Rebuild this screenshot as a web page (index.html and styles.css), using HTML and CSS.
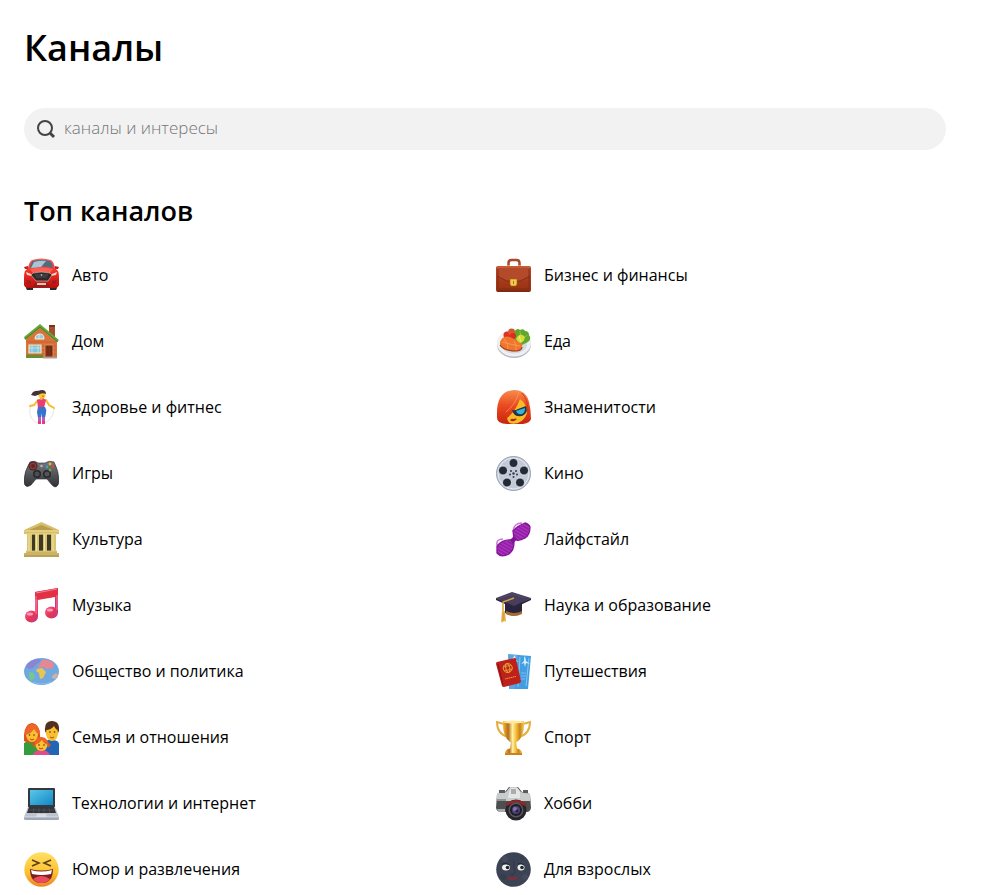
FILE: index.html
```html
<!DOCTYPE html>
<html lang="ru">
<head>
<meta charset="UTF-8" />
<meta name="viewport" content="width=device-width, initial-scale=1" />
<title>Каналы</title>
<link rel="stylesheet" href="styles.css">
</head>
<body>
  <main class="page">
    <h1 class="page-title">Каналы</h1>

    <form class="search" role="search">
      <label class="search-label" for="search-input" aria-label="Поиск">
        <svg class="search-icon" viewBox="0 0 20 20" fill="none" stroke="#444" stroke-width="2" aria-hidden="true"><circle cx="9" cy="9" r="7"/><path d="M14 14l4 4" stroke-width="3"/></svg>
      </label>
      <input class="search-input" id="search-input" type="text" placeholder="каналы и интересы" />
    </form>

    <h2 class="section-title">Топ каналов</h2>

    <ul class="channels">
      <li>
        <a class="channel" href="#auto">
          <svg class="channel-icon" viewBox="0 0 35 35" aria-hidden="true">
            <defs><linearGradient id="car" x2="0" y2="1"><stop stop-color="#f4675b"/><stop offset=".5" stop-color="#ee2c22"/><stop offset="1" stop-color="#b90f0d"/></linearGradient></defs>
            <path d="M2 24h7v8H3q-1-1-1-3zM26 24h7v5q0 2-1 3h-6z" fill="#29282c"/>
            <path d="M8 2q9-3 19 0 3 2 4 8l3 3q1 2 1 8v6q-1 3-4 3H4q-3 0-4-3v-6q0-6 1-8l3-3Q5 4 8 2z" fill="url(#car)"/>
            <path d="M9 3q8-2 17 0 2 1 3 7-11-3-23 0 1-6 3-7z" fill="#526b83"/>
            <path d="M10 4q7-2 12-1l-5 6-10 1z" fill="#a8c4d7"/>
            <path d="M6 11q11-3 23 0l-3 4q-9-1-17 0z" fill="#fa6155"/>
            <path d="M0 9l4-1v3H1zM31 8l4 1-1 2h-3z" fill="#c32020"/>
            <path d="M2 14l5 2 1 2-5-1zM33 14l-5 2-1 2 5-1z" fill="#f5d6cd"/>
            <path d="M9 15q8-2 17 0l2 2-4 6H12l-5-6z" fill="#2d292b" stroke="#e8c0b8" stroke-width=".6"/>
            <path d="M11 17h13M12 19h11" stroke="#716a6c" stroke-width=".6"/>
            <circle cx="17.500" cy="17" r=".8" fill="#ddd"/>
            <path d="M2 22l5 1v3H4zM33 22l-5 1v3h3z" fill="#982020"/>
            <path d="M11 25h13l2 4H9z" fill="#8c2023"/><path d="M13 25h9v2h-9z" fill="#d7c5c0"/>
          </svg>
          <span class="channel-name">Авто</span>
        </a>
      </li>
      <li>
        <a class="channel" href="#business">
          <svg class="channel-icon" viewBox="0 0 35 35" aria-hidden="true">
            <defs><linearGradient id="bag" x2="0" y2="1"><stop stop-color="#b8472a"/><stop offset="1" stop-color="#96300f"/></linearGradient></defs>
            <path d="M12.500 9V5q0-3 3-3h5q3 0 3 3v4" fill="none" stroke="#a8492c" stroke-width="2.500"/>
            <path d="M11 7h3v2h-3zM22 7h3v2h-3z" fill="#d9a144"/>
            <rect y="8" width="35" height="26" rx="2" fill="url(#bag)"/>
            <path d="M1 9h33v9l-10 5H11L1 18z" fill="#b34a2a"/>
            <path d="M1 18l10 5h13l10-5M2 11v20h31V11" fill="none" stroke="#7d2a14" stroke-width=".8"/>
            <path d="M1 9h33" stroke="#d86e49" stroke-width="1"/>
            <path d="M14 21h7v5l-1 2h-5l-1-2z" fill="#f5ca48" stroke="#986117" stroke-width=".6"/>
            <path d="M17.500 23v3" stroke="#a8741e"/>
            <path d="M1 33h33" stroke="#6b2413" stroke-width="1"/>
          </svg>
          <span class="channel-name">Бизнес и финансы</span>
        </a>
      </li>
      <li>
        <a class="channel" href="#home">
          <svg class="channel-icon" viewBox="0 0 35 35" aria-hidden="true">
            <path d="M25 1h6v13h-6z" fill="#a64f2c"/><path d="M25 1h6v2h-6z" fill="#77351f"/>
            <path d="M2 14L16 3l17 14v17H2z" fill="#d9733b"/>
            <path d="M3 18h29M3 22h29M3 26h29M3 30h29" stroke="#b95428" stroke-width=".6"/>
            <path d="M0 13L16 0l19 16-2 2L16 4 1 16z" fill="#67a83a"/><path d="M1 15L16 3l18 15" fill="none" stroke="#3c742a" stroke-width=".8"/>
            <path d="M11 15q0-5 5-5 4 0 4 5z" fill="#91ccec" stroke="#fff0ce"/><path d="M15 10v5" stroke="#fff0ce" stroke-width=".7"/>
            <path d="M5 21h12v8H5z" fill="#78c6ea" stroke="#f7e7be" stroke-width="1.200"/><path d="M8 21v8M14 21v8M5 24h12" stroke="#f7e7be" stroke-width=".7"/>
            <path d="M21 21h8v12h-8z" fill="#803318" stroke="#e7a16d" stroke-width=".7"/><path d="M23 23h1v8M26 23h1v8" stroke="#55200f" fill="none" stroke-width=".7"/>
            <path d="M2 31h17v3H2z" fill="#5c9134"/><path d="M19 33h14v1.500H19z" fill="#a7a09a"/>
          </svg>
          <span class="channel-name">Дом</span>
        </a>
      </li>
      <li>
        <a class="channel" href="#food">
          <svg class="channel-icon" viewBox="0 0 35 35" aria-hidden="true">
            <ellipse cx="18" cy="20.500" rx="17" ry="13.500" fill="#b6b9c2"/><ellipse cx="18" cy="19" rx="17" ry="13.500" fill="#eef0f4"/><ellipse cx="18" cy="20" rx="13" ry="9.500" fill="#d5d9e1"/>
            <path d="M18 8q3-5 6-2 4-2 5 1 4 0 4 4 3 4-1 7l-8 4-8-4z" fill="#61a62e"/><path d="M24 7l1 9M31 11l-7 7" stroke="#9bd153" stroke-width=".7"/>
            <circle cx="11" cy="11" r="3.500" fill="#df3121"/><circle cx="15.500" cy="8" r="3.500" fill="#f04c31"/><circle cx="17" cy="12" r="3" fill="#d82f1c"/>
            <path d="M14 5l2 2 2-2" stroke="#518d26" fill="none"/>
            <path d="M20 15q4-8 9-2-1 6-6 6z" fill="#d5dc37"/><path d="M23 12l2 6" stroke="#f9f4a2" stroke-width=".7"/>
            <path d="M4 18Q8 9 18 15l8 5q1 6-5 7-12 1-17-5z" fill="#f07630"/>
            <path d="M6 18q7 2 18 4M8 15q5 5 4 10M18 17q3 4 2 9" fill="none" stroke="#fda35a" stroke-width=".7"/>
            <path d="M4 21q4 6 17 6 5-1 5-4" fill="none" stroke="#9f421e" stroke-width="1.200"/>
          </svg>
          <span class="channel-name">Еда</span>
        </a>
      </li>
      <li>
        <a class="channel" href="#health">
          <svg class="channel-icon" viewBox="0 0 35 35" aria-hidden="true">
            <path d="M6 17Q4 31 16 34M30 18q-1 13-12 16" fill="none" stroke="#e5dcda" stroke-width=".8"/>
            <path d="M17 1q-5-1-8 1L7 5l4 1q3 0 5-3z" fill="#423238"/>
            <circle cx="18" cy="5" r="3.500" fill="#f9c935"/><path d="M14 5q-1-5 4-5 4 0 4 4-4-2-8 1z" fill="#493437"/>
            <path d="M16 8h3v3h-3z" fill="#eeb52d"/>
            <path d="M14 10l-4 5-4 1M22 10l3 5 5 3" fill="none" stroke="#f6bd2b" stroke-width="2" stroke-linecap="round"/>
            <path d="M13 10l3-1q2 3 3-1l3 2-2 8h-6z" fill="#eb3d73"/>
            <path d="M14 17h7q2 3 1 6l-1 5h-3v-5l-1 5h-3l-1-6z" fill="#3773cd"/>
            <path d="M14 27h3v5h-3zM18 27h3v5h-3z" fill="#b45fb8"/><path d="M14 31h3v3h-3zM18 31h3v3h-3z" fill="#e83a82"/>
            <path d="M18 6q1 1 2 0" stroke="#c8452c" fill="none" stroke-width=".8"/>
          </svg>
          <span class="channel-name">Здоровье и фитнес</span>
        </a>
      </li>
      <li>
        <a class="channel" href="#celebrities">
          <svg class="channel-icon" viewBox="0 0 35 35" aria-hidden="true">
            <defs><linearGradient id="redhair" x2="0" y2="1"><stop stop-color="#f78d4d"/><stop offset=".45" stop-color="#eb4b20"/><stop offset="1" stop-color="#c62510"/></linearGradient></defs>
            <path d="M18 0q12 0 15 12 2 8 2 17-1 4-8 5H11Q0 34 1 26 0 1 18 0z" fill="url(#redhair)"/>
            <path d="M24 9q7 5 7 14-2 7-9 10-10 3-11-5 9-7 13-19z" fill="#f9bc25"/>
            <path d="M16 20q3 1 6-1l8-3q2 5-1 8-3 3-7 2-4 0-6-6z" fill="#263247"/><path d="M20 21l9-3q0 5-3 6-4 1-6-3z" fill="#34b5dc"/>
            <path d="M23 2Q20 14 10 22" fill="none" stroke="#ff965f" stroke-width=".8"/><path d="M26 3q6 7 6 18" fill="none" stroke="#c32e12" stroke-width=".7"/>
            <path d="M14 30q2-2 3-1 3-1 4 0-4 4-7 1z" fill="#a72718"/>
          </svg>
          <span class="channel-name">Знаменитости</span>
        </a>
      </li>
      <li>
        <a class="channel" href="#games">
          <svg class="channel-icon" viewBox="0 0 35 35" aria-hidden="true">
            <defs><linearGradient id="pad" x2="0" y2="1"><stop stop-color="#77797c"/><stop offset="1" stop-color="#313235"/></linearGradient></defs>
            <path d="M6 6q5-2 8 1h7q4-3 9-1 5 9 5 20-2 8-7 3l-5-6H12l-5 6q-6 4-7-3Q0 15 6 6z" fill="url(#pad)" stroke="#29292c" stroke-width=".6"/>
            <circle cx="9" cy="10" r="4.500" fill="#37272a"/><circle cx="9" cy="10" r="3.500" fill="#963534"/><circle cx="9" cy="10" r="2" fill="#5d2829"/>
            <circle cx="13" cy="18" r="4" fill="#26272a"/><circle cx="13" cy="18" r="2.500" fill="#4b4d50"/><circle cx="23" cy="18" r="4" fill="#26272a"/><circle cx="23" cy="18" r="2.500" fill="#515356"/>
            <circle cx="26" cy="8" r="1.400" fill="#efb529"/><circle cx="29" cy="11" r="1.400" fill="#e14132"/><circle cx="23" cy="11" r="1.400" fill="#459dcb"/><circle cx="26" cy="14" r="1.400" fill="#66ae45"/>
            <circle cx="17.500" cy="10" r="1.300" fill="#b5b5b5"/>
          </svg>
          <span class="channel-name">Игры</span>
        </a>
      </li>
      <li>
        <a class="channel" href="#cinema">
          <svg class="channel-icon" viewBox="0 0 35 35" aria-hidden="true">
            <circle cx="17.500" cy="17.500" r="17" fill="#c3c9d7" stroke="#9ba2b3"/><circle cx="17.500" cy="17.500" r="15.500" fill="none" stroke="#e7ebf4"/>
            <g fill="#232b37" stroke="#eef0f5" stroke-width=".8"><circle cx="17.500" cy="7" r="4.500"/><circle cx="28" cy="14.500" r="4.500"/><circle cx="24" cy="26.500" r="4.500"/><circle cx="11" cy="26.500" r="4.500"/><circle cx="7" cy="14.500" r="4.500"/></g>
            <g fill="#35394b"><circle cx="17.500" cy="17.500" r="1.200"/><circle cx="15" cy="15" r="1"/><circle cx="20" cy="15" r="1"/><circle cx="21" cy="18.500" r="1"/><circle cx="17.500" cy="21" r="1"/><circle cx="14" cy="18.500" r="1"/></g>
          </svg>
          <span class="channel-name">Кино</span>
        </a>
      </li>
      <li>
        <a class="channel" href="#culture">
          <svg class="channel-icon" viewBox="0 0 35 35" aria-hidden="true">
            <path d="M3 11h29v19H3z" fill="#675521"/>
            <path d="M8 13h4v17H8zM15 13h4v17h-4zM23 13h4v17h-4z" fill="#3c3925"/>
            <path d="M3 12h5v18H3zM11 12h4v18h-4zM19 12h4v18h-4zM27 12h5v18h-5z" fill="#d9c475"/>
            <path d="M5 13v16M12.500 13v16M20.500 13v16M29 13v16" stroke="#f5e39e"/>
            <path d="M0 8L17.500 0 35 8v4H0z" fill="#d8be69"/><path d="M5 8l12.500-5L30 8z" fill="#b89d4d"/><path d="M0 9h35M2 12h31" stroke="#f0dc94"/>
            <path d="M2 29h31v3H2z" fill="#cbb464"/><path d="M0 31h35v4H0z" fill="#baa154"/><path d="M0 32h35M2 29h31" stroke="#e5d083" stroke-width=".8"/>
          </svg>
          <span class="channel-name">Культура</span>
        </a>
      </li>
      <li>
        <a class="channel" href="#lifestyle">
          <svg class="channel-icon" viewBox="0 0 35 35" aria-hidden="true">
            <defs><pattern id="shutter" width="3" height="3" patternUnits="userSpaceOnUse" patternTransform="rotate(30)"><path d="M0 0h3v3H0z" fill="#b832cc"/><path d="M0 2h3" stroke="#6a1278"/></pattern></defs>
            <path d="M17 9q1-8 9-8M1 23q-1-6 6-6" fill="none" stroke="#c878d5" stroke-width="1.500"/>
            <path d="M17 9q4-5 12-8 4 1 5 4 0 8-5 11-7 4-11 1zM1 24q6-7 14-6l3 3q0 7-5 11-8 4-12-1z" fill="url(#shutter)" stroke="#84159a" stroke-width="1.300"/>
            <path d="M14 18l4-4 3 3-4 5z" fill="#82119b"/>
          </svg>
          <span class="channel-name">Лайфстайл</span>
        </a>
      </li>
      <li>
        <a class="channel" href="#music">
          <svg class="channel-icon" viewBox="0 0 35 35" aria-hidden="true">
            <defs><linearGradient id="note" x2="1" y2="1"><stop stop-color="#f0609f"/><stop offset=".5" stop-color="#e73754"/><stop offset="1" stop-color="#b8388f"/></linearGradient></defs>
            <path d="M11 4L34 0v25h-3V9l-17 3v17h-3z" fill="url(#note)"/><path d="M11 4L34 0v8l-23 4z" fill="#e23142"/>
            <ellipse cx="7.500" cy="28.500" rx="6.500" ry="6" fill="url(#note)"/><ellipse cx="27.500" cy="24.500" rx="6.500" ry="6" fill="url(#note)"/>
            <path d="M12 5l21-4M12 8v18M33 7v15" stroke="#f493bb" stroke-width=".8"/><ellipse cx="6" cy="26" rx="3" ry="1.500" fill="#ff9bb8"/><ellipse cx="26" cy="22" rx="3" ry="1.500" fill="#ff9bb8"/>
          </svg>
          <span class="channel-name">Музыка</span>
        </a>
      </li>
      <li>
        <a class="channel" href="#science">
          <svg class="channel-icon" viewBox="0 0 35 35" aria-hidden="true">
            <path d="M9 14h17v11q-7 5-17 0z" fill="#28243d"/><path d="M10 23q9 4 16 0v3q-8 4-16 0z" fill="#a26b34"/>
            <path d="M0 10L16 4l19 6-17 9z" fill="#463e5c"/><path d="M0 10l18 8 17-8v2L18 20 0 12z" fill="#2b2542"/><path d="M4 10l12-4 13 4" fill="none" stroke="#675976" stroke-width=".5"/>
            <path d="M18 10L7 14v11" fill="none" stroke="#d9a23c" stroke-width="1.500"/><path d="M6 23h3l1 11-2-1-2 2-1-2z" fill="#eab94e"/><path d="M7 24v9M8 25v7" stroke="#b9842d" stroke-width=".5"/>
          </svg>
          <span class="channel-name">Наука и образование</span>
        </a>
      </li>
      <li>
        <a class="channel" href="#society">
          <svg class="channel-icon" viewBox="0 0 35 35" aria-hidden="true">
            <ellipse cx="17.500" cy="17.500" rx="17.500" ry="13.500" fill="#6fa9df"/>
            <path d="M3 10q5-5 12-5l2 2-4 3-4 4-4 1-3-2z" fill="#8a86d4"/><path d="M15 11l3-5q8-1 12 4l-1 4-6 1-3-2-5 1z" fill="#e88792"/>
            <path d="M13 15l5-1 4 4-3 6-3 1-1-6-3-2z" fill="#edc454"/><path d="M5 18l5 1 1 4-4 5-2-5z" fill="#75c68f"/><path d="M28 22l4-3 2 2-3 4-3-1z" fill="#d7af9a"/>
            <path d="M9 28q9 4 18 0" stroke="#8abfe9" fill="none"/>
          </svg>
          <span class="channel-name">Общество и политика</span>
        </a>
      </li>
      <li>
        <a class="channel" href="#travel">
          <svg class="channel-icon" viewBox="0 0 35 35" aria-hidden="true">
            <path d="M12 0l12 1-2 34h-9z" fill="#5aa6e0"/><path d="M22 1l13 1-3 33H19z" fill="#439de2"/><path d="M24 3l-2 30M33 4l-3 28" fill="none" stroke="#8bc8f1"/>
            <path d="M16 5l3-4 1 5 3 2-4-1-1 3-1-3-4 1zM28 4l1-2 1 5 4 3-4-1-1 4-1-4-3 1 3-3z" fill="#d4edfb"/><path d="M25 19h5M25 22h5M24 25h5" stroke="#91c9ef" stroke-width=".7"/>
            <path d="M1 8l18-4q1 0 1 1l5 22q0 1-1 2L8 33q-2 0-2-1L0 10q0-2 1-2z" fill="#be211c"/><path d="M2 10l5 21" stroke="#85120f"/>
            <g transform="rotate(-13 12 15)" fill="none" stroke="#e8aa35" stroke-width=".9"><circle cx="12" cy="14" r="4.500"/><ellipse cx="12" cy="14" rx="2" ry="4.500"/><path d="M8 12h8M8 16h8M7 24h11" stroke-dasharray="1.500 .5"/></g>
          </svg>
          <span class="channel-name">Путешествия</span>
        </a>
      </li>
      <li>
        <a class="channel" href="#family">
          <svg class="channel-icon" viewBox="0 0 35 35" aria-hidden="true">
            <path d="M0 23q6-4 13-2 5 2 6 14H0z" fill="#339c3d"/><path d="M17 24q5-5 13-4 5 1 5 4v11H16z" fill="#2166b6"/>
            <path d="M0 21Q-1 4 8 3q9 1 8 17l-4 3H4z" fill="#df5020"/><ellipse cx="8" cy="14" rx="6" ry="8" fill="#fbc02f"/><path d="M1 15Q1 5 8 4q8 1 8 11-4-2-6-6-3 5-9 6z" fill="#ed6529"/>
            <path d="M21 11q-1-10 7-10t7 10l-2 4H23z" fill="#58331d"/><ellipse cx="28" cy="13" rx="6" ry="8" fill="#fbc02f"/><path d="M22 10q5 0 8-4 2 4 4 4l-1-6-5-3-5 3z" fill="#51301f"/>
            <path d="M9 35q1-5 8-5t9 5z" fill="#df4d8d"/><path d="M12 21l-4 4 3 3M23 21l4 4-3 3" fill="#dc531f"/><circle cx="17.500" cy="25" r="6" fill="#fbc233"/><path d="M11 25q0-8 6-8 7 0 7 8-4-1-6-5-3 4-7 5z" fill="#ed6327"/>
            <g fill="#48301c"><circle cx="5.500" cy="15" r=".8"/><circle cx="10" cy="15" r=".8"/><circle cx="26" cy="12" r=".8"/><circle cx="30.500" cy="12" r=".8"/><circle cx="15" cy="25" r=".8"/><circle cx="20" cy="25" r=".8"/></g>
            <path d="M6 19q2 2 4 0M26 17q2 2 4 0M15 28q2 2 4 0" fill="none" stroke="#b74122"/>
          </svg>
          <span class="channel-name">Семья и отношения</span>
        </a>
      </li>
      <li>
        <a class="channel" href="#sport">
          <svg class="channel-icon" viewBox="0 0 35 35" aria-hidden="true">
            <defs><linearGradient id="cup"><stop stop-color="#f6bf31"/><stop offset=".25" stop-color="#b56a18"/><stop offset=".45" stop-color="#fff2a4"/><stop offset=".65" stop-color="#f3b62d"/><stop offset=".8" stop-color="#c78321"/><stop offset="1" stop-color="#f8cf58"/></linearGradient></defs>
            <path d="M8 4L1 2q0 12 11 15M27 4l7-2q0 12-11 15" fill="none" stroke="#e5ae43" stroke-width="2"/>
            <path d="M7 1h21q1 15-7 21h-7Q6 16 7 1z" fill="url(#cup)"/><ellipse cx="17.500" cy="2" rx="10.500" ry="1.500" fill="#ffeaa2"/>
            <path d="M15 21h5l1 8h-7zM9 32q2-4 8.500-4t8.500 4v2H9z" fill="url(#cup)"/><path d="M9 33h17v2H9z" fill="#c98222"/>
          </svg>
          <span class="channel-name">Спорт</span>
        </a>
      </li>
      <li>
        <a class="channel" href="#tech">
          <svg class="channel-icon" viewBox="0 0 35 35" aria-hidden="true">
            <defs><linearGradient id="screen" x2="1" y2="1"><stop stop-color="#5bc6ea"/><stop offset="1" stop-color="#1188c5"/></linearGradient></defs>
            <rect x="4" y="2" width="27" height="20" rx="1" fill="#343940"/><path d="M6 4h23v15H6z" fill="url(#screen)"/>
            <path d="M4 21h27l4 10H0z" fill="#bfc3ce"/><path d="M5 21h25l2 6H3z" fill="#33353c"/><path d="M5 24h25M10 22l-1 5M15 22v5M20 22v5M25 22l1 5" stroke="#5d6068" stroke-width=".5"/>
            <path d="M13 28h9l1 3H12z" fill="#d8dce3"/><path d="M0 31h35v2q0 1-2 1H2q-2 0-2-1z" fill="#a0a7b5"/><path d="M0 31h35" stroke="#e6e9f0" stroke-width=".7"/>
          </svg>
          <span class="channel-name">Технологии и интернет</span>
        </a>
      </li>
      <li>
        <a class="channel" href="#hobby">
          <svg class="channel-icon" viewBox="0 0 35 35" aria-hidden="true">
            <path d="M1 8l8-2 4-5h9l4 5 8 2 1 14q-1 4-4 4H5q-4 0-5-4z" fill="#4d4e50"/>
            <path d="M1 7l9-1 4-5h7l4 5 9 2v7H1z" fill="#c9cccc"/><path d="M13 6l2-4h6l3 4v6H12z" fill="#e5e6e3"/><path d="M15 3h5v5h-5z" fill="#a9adae"/>
            <path d="M3 4h6v3H3zM27 4h5v3h-5z" fill="#5a5c5d"/><path d="M1 13h9v2H1z" fill="#8f9493"/><path d="M1 23h8v3H3z" fill="#a9abad"/>
            <circle cx="20" cy="24" r="10.500" fill="#272529"/><path d="M10 19q10-7 20 0" fill="none" stroke="#8b2929" stroke-width="3"/>
            <circle cx="20" cy="24" r="7.500" fill="#59575b"/><circle cx="20" cy="24" r="6" fill="#1d1d25"/><circle cx="20" cy="24" r="4" fill="#514479"/><circle cx="19" cy="23" r="2" fill="#8676b1"/><circle cx="21" cy="25" r="1.500" fill="#292243"/>
          </svg>
          <span class="channel-name">Хобби</span>
        </a>
      </li>
      <li>
        <a class="channel" href="#humor">
          <svg class="channel-icon" viewBox="0 0 35 35" aria-hidden="true">
            <defs><linearGradient id="smile" x2="0" y2="1"><stop stop-color="#ffe064"/><stop offset=".6" stop-color="#fdc131"/><stop offset="1" stop-color="#eb8524"/></linearGradient></defs>
            <circle cx="17.500" cy="17.500" r="17.200" fill="url(#smile)"/>
            <path d="M8 8l7 3-7 3M27 8l-7 3 7 3" fill="none" stroke="#614015" stroke-width="1.600"/>
            <path d="M6 17q12 3 23 0 0 14-11.500 14T6 17z" fill="#7b201e"/><path d="M7 18q10 3 21 0l-1 4q-9 2-19 0z" fill="#fff"/><path d="M9 27q8-6 17 0-3 4-8.500 4T9 27z" fill="#e94c61"/>
          </svg>
          <span class="channel-name">Юмор и развлечения</span>
        </a>
      </li>
      <li>
        <a class="channel" href="#adult">
          <svg class="channel-icon" viewBox="0 0 35 35" aria-hidden="true">
            <circle cx="17.500" cy="17.500" r="17.300" fill="#3c4354"/><path d="M18 9q-1 7 1 11l-2 3-3-1" fill="none" stroke="#2b3342" stroke-width=".8"/>
            <circle cx="9" cy="7" r="3" fill="#444b5c"/><circle cx="26" cy="6" r="2" fill="#363d4d"/><circle cx="29" cy="25" r="3" fill="#444b5c"/><circle cx="7" cy="25" r="3" fill="#363d4d"/>
            <ellipse cx="10" cy="15.500" rx="4" ry="3" fill="#f0f1ef"/><ellipse cx="25" cy="15.500" rx="3.500" ry="3" fill="#f0f1ef"/><circle cx="11.500" cy="15.500" r="1.800" fill="#202530"/><circle cx="26" cy="15.500" r="1.800" fill="#202530"/><path d="M6 12q4-2 8 1M22 12q3-2 6 1" fill="none" stroke="#222938"/>
            <path d="M11 26q4-2 6 0 3-2 6-1-5 6-12 1z" fill="#842d32"/>
          </svg>
          <span class="channel-name">Для взрослых</span>
        </a>
      </li>
    </ul>
  </main>
</body>
</html>
```

FILE: styles.css
```css
* {
  box-sizing: border-box;
}

body {
  margin: 0;
  background: #fff;
  color: #000;
  font-family: "Open Sans", "Noto Sans", sans-serif;
}

.page {
  padding: 24px 55px 8px 24px;
}

.page-title {
  margin: 0 0 36px;
  font-size: 36px;
  line-height: 48px;
  font-weight: 600;
}

/* Search */
.search {
  display: flex;
  align-items: center;
  height: 42px;
  padding: 0 12px;
  border-radius: 21px;
  background: #f2f2f2;
}

.search-label {
  display: flex;
}

.search-icon {
  width: 20px;
  height: 20px;
}

.search-input {
  flex: 1;
  min-width: 0;
  margin-left: 8px;
  padding: 0 0 2px;
  border: none;
  outline: none;
  background: transparent;
  font-family: inherit;
  font-size: 17px;
  font-weight: 300;
  line-height: 24px;
}

.search-input::placeholder {
  color: #757575;
  opacity: 1;
}

.section-title {
  margin: 44px 0 30px;
  font-size: 27px;
  line-height: 34px;
  font-weight: 600;
}

/* Channel list */
.channels {
  display: grid;
  grid-template-columns: 1fr 1fr;
  gap: 31px 22px;
  margin: 0;
  padding: 0;
  list-style: none;
}

.channel {
  display: flex;
  align-items: center;
  gap: 13px;
  color: #000;
  font-size: 16px;
  line-height: 20px;
  text-decoration: none;
}

.channel-icon {
  flex: none;
  width: 35px;
  height: 35px;
}

.channel-name {
  padding-bottom: 2px;
}
```
